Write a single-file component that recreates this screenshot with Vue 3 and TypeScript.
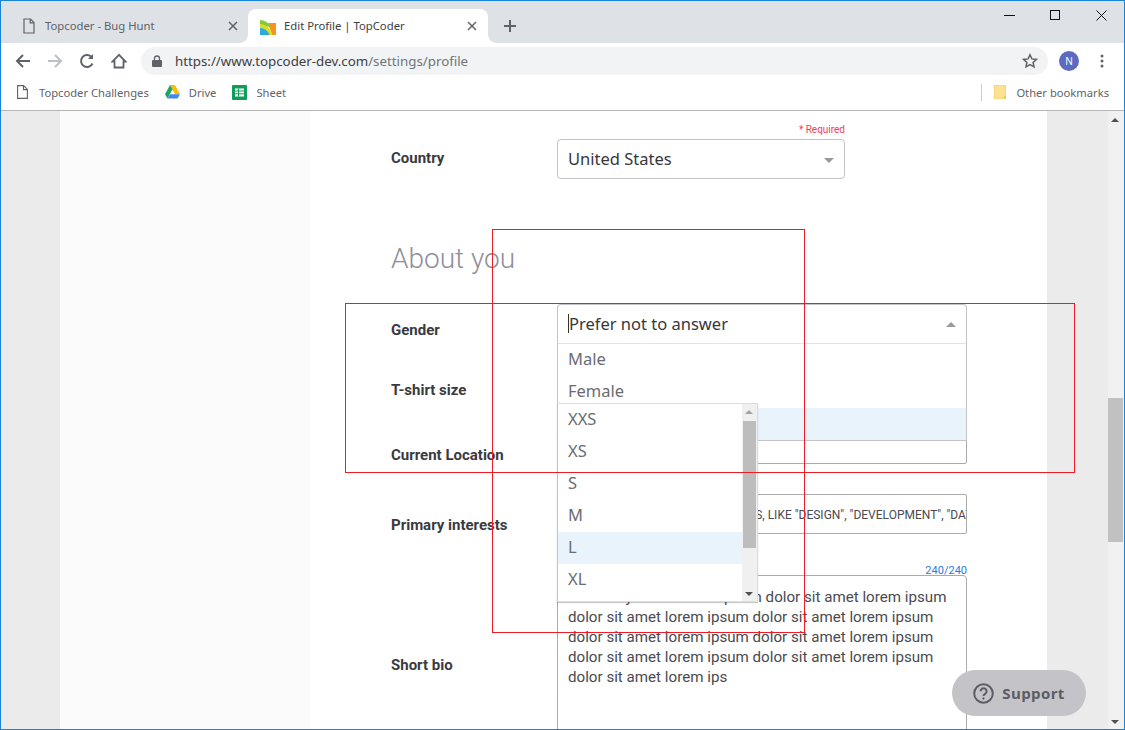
<script setup lang="ts">
const genderOptions = [
  { label: 'Male', active: false },
  { label: 'Female', active: false },
  { label: 'Prefer not to answer', active: true },
]
const sizeOptions = ['XXS', 'XS', 'S', 'M', 'L', 'XL']
const loremLine = 'dolor sit amet lorem ipsum dolor sit amet lorem ipsum'
const bio = `Summary notes lorem ipsum dolor sit amet lorem ipsum ${loremLine} ${loremLine} ${loremLine} dolor sit amet lorem ips`
</script>

<template>
  <div class="window">
    <header class="tabstrip">
      <div class="tab">
        <svg class="tab-icon" width="12" height="16" viewBox="0 0 12 16" fill="none" stroke="#5f6368" stroke-width="1.2">
          <path d="M1 1h6.500L11 4.500V15H1z" /><path d="M7.200 1v3.800H11" />
        </svg>
        <span class="tab-title">Topcoder - Bug Hunt</span>
        <svg class="tab-close" width="10" height="10" viewBox="0 0 10 10" stroke="#5f6368" stroke-width="1.5"><path d="M1 1l8 8M9 1l-8 8" /></svg>
      </div>
      <div class="tab tab-active">
        <svg class="tab-favicon" width="16" height="15" viewBox="0 0 16 15">
          <path d="M8 3h8v12h-4z" fill="#f7931e" />
          <path d="M0 0c5 0 9 3 10.500 7L0 6z" fill="#8cc63f" />
          <path d="M0 4c6 0 11 5 12.500 11H8L0 8z" fill="#d7df23" />
          <path d="M0 8c4.500 0 8 3 9.500 7H0z" fill="#29abe2" />
        </svg>
        <span class="tab-title tab-title-active">Edit Profile | TopCoder</span>
        <svg class="tab-close tab-close-active" width="10" height="10" viewBox="0 0 10 10" stroke="#5f6368" stroke-width="1.5"><path d="M1 1l8 8M9 1l-8 8" /></svg>
      </div>
      <svg class="new-tab" width="14" height="14" viewBox="0 0 14 14" stroke="#5f6368" stroke-width="2"><path d="M7 1v12M1 7h12" /></svg>
      <div class="window-controls">
        <svg width="11" height="11" viewBox="0 0 11 11" stroke="#111" stroke-width="1"><path d="M0 5.500h11" /></svg>
        <svg width="11" height="11" viewBox="0 0 11 11" fill="none" stroke="#111" stroke-width="1"><rect x=".5" y=".5" width="9" height="9" /></svg>
        <svg width="11" height="11" viewBox="0 0 11 11" stroke="#111" stroke-width="1"><path d="M.5.500l10 10M10.500.500l-10 10" /></svg>
      </div>
    </header>

    <div class="toolbar">
      <svg class="tool" width="16" height="16" viewBox="0 0 16 16" fill="none" stroke="#5f6368" stroke-width="2"><path d="M15 8H2M8 2L2 8l6 6" /></svg>
      <svg class="tool" width="16" height="16" viewBox="0 0 16 16" fill="none" stroke="#bdc1c6" stroke-width="2"><path d="M1 8h13M8 2l6 6-6 6" /></svg>
      <svg class="tool" width="16" height="16" viewBox="0 0 16 16" fill="none" stroke="#5f6368" stroke-width="2"><path d="M13.500 10.500A6 6 0 1 1 12.200 3.700" /><path d="M14 1v5H9z" fill="#5f6368" stroke="none" /></svg>
      <svg class="tool" width="16" height="16" viewBox="0 0 16 16" fill="none" stroke="#5f6368" stroke-width="1.8"><path d="M8 1.800L1.500 8.500h2v6h9v-6h2z" /></svg>
      <div class="omnibox">
        <svg width="10" height="12" viewBox="0 0 10 12"><path d="M1 5h8a1 1 0 0 1 1 1v5a1 1 0 0 1-1 1H1a1 1 0 0 1-1-1V6a1 1 0 0 1 1-1z" fill="#5f6368" /><path d="M2.500 5V3.500a2.500 2.500 0 0 1 5 0V5" fill="none" stroke="#5f6368" stroke-width="1.300" /></svg>
        <span class="url"><span class="url-host">https://www.topcoder-dev.com</span>/settings/profile</span>
        <svg class="star" width="16" height="16" viewBox="0 0 16 16" fill="none" stroke="#5f6368" stroke-width="1.500"><path d="M8 1.800l1.900 4.100 4.500.5-3.300 3 .9 4.400L8 11.600l-4 2.200.9-4.400-3.300-3 4.500-.5z" /></svg>
      </div>
      <span class="avatar">N</span>
      <svg class="menu-dots" width="4" height="14" viewBox="0 0 4 14" fill="#5f6368"><circle cx="2" cy="2" r="1.500" /><circle cx="2" cy="7" r="1.500" /><circle cx="2" cy="12" r="1.500" /></svg>
    </div>

    <nav class="bookmarks">
      <span class="bookmark bookmark-doc">
        <svg width="11" height="14" viewBox="0 0 11 14" fill="none" stroke="#5f6368" stroke-width="1.100"><path d="M.6.600h6l3.800 3.800v9H.6z" /><path d="M6.500.600v4h3.900" /></svg>
        Topcoder Challenges
      </span>
      <span class="bookmark">
        <svg width="15" height="14" viewBox="0 0 15 14"><path d="M5 0h5l5 9.200h-5z" fill="#fbbc04" /><path d="M5 0l2.500 4.300L2.500 13.500 0 9.200z" fill="#1fa463" /><path d="M2.500 13.500L5 9.200h10l-2.500 4.300z" fill="#4285f4" /></svg>
        Drive
      </span>
      <span class="bookmark">
        <svg width="15" height="15" viewBox="0 0 15 15"><rect width="15" height="15" rx="1" fill="#0f9d58" /><path d="M3 3.500h9v8H3z" fill="#fff" /><path d="M3 6h9M3 8.800h9M6.500 3.500v8" stroke="#0f9d58" stroke-width="1" /></svg>
        Sheet
      </span>
      <span class="bookmarks-sep"></span>
      <span class="bookmark other">
        <svg width="12" height="14" viewBox="0 0 12 14"><path d="M0 0h11a1 1 0 0 1 1 1v13H0z" fill="#fde293" stroke="#f0c95c" stroke-width=".8" /><rect x="10" y="11" width="2" height="3" fill="#f0c95c" /></svg>
        Other bookmarks
      </span>
    </nav>

    <main class="viewport">
      <div class="gutter"></div>
      <div class="sidebar"></div>
      <section class="form">
        <div class="required">* Required</div>
        <div class="row row-country">
          <label class="label label-country">Country</label>
          <div class="select select-country">
            <span>United States</span>
            <i class="caret caret-down"></i>
          </div>
        </div>

        <h2 class="heading">About you</h2>

        <div class="row row-gender">
          <label class="label label-gender">Gender</label>
          <div class="field-anchor">
            <div class="select select-open">
              <span class="cursor"></span><span>Prefer not to answer</span>
              <i class="caret caret-up"></i>
            </div>
            <ul class="menu menu-gender">
              <li v-for="o in genderOptions" :key="o.label" class="option" :class="{ 'option-active': o.active }">{{ o.label }}</li>
            </ul>
          </div>
        </div>

        <div class="row row-size">
          <label class="label label-size">T-shirt size</label>
          <div class="field-anchor">
            <div class="menu-size">
              <ul class="size-list">
                <li v-for="s in sizeOptions" :key="s" class="option" :class="{ 'option-active': s === 'L' }">{{ s }}</li>
              </ul>
              <div class="mini-scroll">
                <i class="caret mini-up"></i>
                <div class="mini-thumb"></div>
                <i class="caret mini-down"></i>
              </div>
            </div>
          </div>
        </div>

        <div class="row row-location">
          <label class="label label-low">Current Location</label>
          <div class="input"></div>
        </div>

        <div class="row row-interests">
          <label class="label label-low">Primary interests</label>
          <div class="input interests">SELECT YOUR PRIMARY INTERESTS, LIKE "DESIGN", "DEVELOPMENT", "DATA SCIENCE"</div>
        </div>

        <div class="counter">240/240</div>
        <div class="row row-bio">
          <label class="label label-bio">Short bio</label>
          <div class="textarea">{{ bio }}</div>
        </div>
      </section>
      <div class="gutter gutter-right"></div>
      <aside class="scrollbar">
        <i class="caret sb-up"></i>
        <div class="sb-thumb"></div>
        <i class="caret sb-down"></i>
      </aside>

      <div class="mark mark-tall"></div>
      <div class="mark mark-wide"></div>

      <button class="support">
        <svg width="21" height="21" viewBox="0 0 21 21" fill="none" stroke="#5d5c63" stroke-width="2">
          <circle cx="10.500" cy="10.500" r="9.300" />
          <path d="M7.600 8.200a3 3 0 1 1 4.500 2.600c-1 .6-1.600 1-1.600 2.200" />
          <circle cx="10.500" cy="15.500" r=".7" fill="#5d5c63" stroke-width="1" />
        </svg>
        Support
      </button>
    </main>
  </div>
</template>

<style>
html, body { margin: 0; padding: 0; background: #fff; }
</style>

<style scoped>
.window {
  width: 1125px;
  height: 730px;
  box-sizing: border-box;
  border: 1px solid #1883d7;
  display: flex;
  flex-direction: column;
  overflow: hidden;
  font-family: "Noto Sans", sans-serif;
  background: #fff;
}
.tabstrip {
  height: 42px;
  flex: none;
  display: flex;
  align-items: flex-end;
  background: #dee1e6;
  position: relative;
}
.tab {
  width: 233px;
  margin-left: 14px;
  height: 34px;
  display: flex;
  align-items: center;
  padding-left: 8px;
  box-sizing: border-box;
}
.tab-icon { margin-right: 10px; }
.tab-title {
  font-size: 11.3px;
  line-height: 16px;
  color: #5f6368;
  flex: 1;
  white-space: nowrap;
  margin-bottom: 0;
}
.tab-close { margin-right: 10px; }
.tab-close-active { margin-right: 11px; }
.tab-active {
  width: 240px;
  margin-left: 0;
  background: #fff;
  border-radius: 8px 8px 0 0;
  padding-left: 12px;
  position: relative;
}
.tab-active::before,
.tab-active::after {
  content: "";
  position: absolute;
  bottom: 0;
  width: 8px;
  height: 8px;
}
.tab-active::before {
  left: -8px;
  background: radial-gradient(circle at 0 0, #dee1e6 7.5px, #fff 8px);
}
.tab-active::after {
  right: -8px;
  background: radial-gradient(circle at 100% 0, #dee1e6 7.5px, #fff 8px);
}
.tab-favicon { margin-right: 8px; margin-top: 2px; }
.tab-title-active { color: #3c4043; }
.new-tab { margin: 0 0 10px 15px; }
.window-controls {
  position: absolute;
  top: 9px;
  right: 17px;
  display: flex;
  gap: 35px;
}
.toolbar {
  height: 35px;
  flex: none;
  display: flex;
  align-items: center;
  padding-left: 14px;
  background: #fff;
}
.tool { margin-right: 16px; flex: none; }
.omnibox {
  width: 907px;
  height: 28px;
  margin-left: -2px;
  box-sizing: border-box;
  padding: 0 10px 0 11px;
  background: #f1f3f4;
  border-radius: 14px;
  display: flex;
  align-items: center;
  flex: none;
}
.url {
  font-size: 13.3px;
  color: #70757a;
  margin-left: 13px;
  flex: 1;
}
.url-host { color: #3c4043; }
.avatar {
  width: 20px;
  height: 20px;
  margin-left: 11px;
  border-radius: 50%;
  background: #5c6bc0;
  color: #fff;
  font-size: 10px;
  display: flex;
  align-items: center;
  justify-content: center;
  flex: none;
}
.menu-dots { margin-left: 21px; flex: none; }
.bookmarks {
  height: 33px;
  flex: none;
  box-sizing: border-box;
  border-bottom: 1px solid #b6b6b6;
  padding-bottom: 4px;
  display: flex;
  align-items: center;
  padding-left: 16px;
  background: #fff;
}
.bookmark {
  display: flex;
  align-items: center;
  gap: 9px;
  font-size: 11.2px;
  color: #5f6368;
  margin-right: 16px;
  white-space: nowrap;
}
.bookmark-doc { gap: 11px; }
.bookmarks-sep {
  margin-left: auto;
  width: 1px;
  height: 17px;
  background: #ccc;
  margin-right: 12px;
}
.other { margin-right: 15px; gap: 10px; }
.viewport {
  flex: 1;
  min-height: 0;
  display: flex;
  position: relative;
  overflow: hidden;
}
.gutter { width: 59px; flex: none; background: #ebebeb; }
.gutter-right { width: 61px; }
.sidebar { width: 250px; flex: none; background: #fbfbfb; }
.form {
  width: 737px;
  flex: none;
  box-sizing: border-box;
  padding-left: 81px;
  padding-top: 12px;
  background: #fff;
}
.required {
  width: 454px;
  text-align: right;
  font: 10px/14px "Roboto", sans-serif;
  color: #ef3a5d;
  height: 16px;
}
.row {
  display: grid;
  grid-template-columns: 166px 410px;
  align-items: start;
}
.label {
  font: 700 15px/20px "Roboto", sans-serif;
  color: #3a3a3f;
}
.label-country { margin-top: 9px; }
.label-gender { margin-top: 16px; }
.label-size { margin-top: 16px; }
.label-low { margin-top: 21px; }
.label-bio { margin-top: 80px; }
.select {
  box-sizing: border-box;
  height: 40px;
  border: 1px solid #c3c3c8;
  border-radius: 4px;
  display: flex;
  align-items: center;
  padding: 0 0 2px 10px;
  font-size: 16.5px;
  color: #37373c;
  position: relative;
  background: #fff;
}
.select-country { width: 288px; }
.caret {
  position: absolute;
  width: 0;
  height: 0;
  border-left: 5px solid transparent;
  border-right: 5px solid transparent;
}
.caret-down { right: 10px; top: 18px; border-top: 5px solid #999; }
.caret-up { right: 10px; top: 17px; border-bottom: 5px solid #999; }
.heading {
  margin: 59px 0 25px;
  font: 300 28px/41px "Roboto", sans-serif;
  color: #8f8f99;
}
.row-gender { height: 60px; }
.row-size { height: 60px; }
.field-anchor { position: relative; width: 410px; }
.select-open { border-radius: 4px 4px 0 0; border-color: #c3c3c8; border-bottom-color: #e3e3e3; }
.cursor {
  width: 1px;
  height: 19px;
  background: #333;
}
.menu {
  list-style: none;
  margin: 0;
  padding: 0;
}
.menu-gender {
  position: absolute;
  z-index: 1;
  top: 40px;
  left: 0;
  width: 100%;
  box-sizing: border-box;
  border: 1px solid #c3c3c8;
  border-top: 0;
  background: #fff;
  height: 97px;
}
.option {
  box-sizing: border-box;
  height: 32px;
  padding-left: 10px;
  font-size: 16.5px;
  line-height: 30px;
  color: #6b6b72;
}
.option-active { background: #e9f3fc; }
.menu-size {
  position: absolute;
  z-index: 2;
  left: 0;
  top: 39px;
  width: 201px;
  height: 199px;
  box-sizing: border-box;
  border: 1px solid #dcdcdc;
  border-left-color: #c3c3c8;
  background: #fff;
  display: flex;
  box-shadow: 0 1px 1px rgba(0, 0, 0, 0.2);
}
.size-list { list-style: none; margin: 0; padding: 0; flex: 1; }
.mini-scroll {
  width: 15px;
  flex: none;
  background: #f0f0f0;
  position: relative;
}
.mini-thumb {
  position: absolute;
  top: 17px;
  left: 1px;
  width: 13px;
  height: 127px;
  background: #bdbdbd;
}
.mini-up { top: 6px; left: 3px; border-left-width: 4px; border-right-width: 4px; border-bottom: 4px solid #a3a3a3; }
.mini-down { bottom: 5px; left: 3px; border-left-width: 4px; border-right-width: 4px; border-top: 4px solid #505050; }
.input {
  box-sizing: border-box;
  height: 40px;
  border: 1px solid #aaa;
  border-radius: 2px;
  background: #fff;
}
.row-location { height: 70px; }
.row-interests { height: 41px; }
.interests {
  font: 12px/41px "Roboto", sans-serif;
  color: #4a4a50;
  padding-left: 11px;
  overflow: hidden;
  white-space: nowrap;
}
.counter {
  width: 576px;
  text-align: right;
  font: 11px/14px "Roboto", sans-serif;
  color: #2c7be5;
  height: 11px;
  margin-top: -12px;
  padding-top: 41px;
}
.textarea {
  box-sizing: border-box;
  height: 200px;
  border: 1px solid #aaa;
  border-radius: 4px 4px 0 0;
  padding: 11px 10px;
  font: 15.15px/20px "Roboto", sans-serif;
  color: #4a4a50;
}
.scrollbar {
  width: 16px;
  flex: none;
  background: #f1f1f1;
  position: relative;
}
.sb-thumb {
  position: absolute;
  left: 0;
  top: 287px;
  width: 15px;
  height: 144px;
  background: #c1c1c1;
}
.sb-up { top: 7px; left: 3px; border-left-width: 4px; border-right-width: 4px; border-bottom: 4px solid #505050; }
.sb-down { bottom: 5px; left: 3px; border-left-width: 4px; border-right-width: 4px; border-top: 4px solid #505050; }
.mark {
  position: absolute;
  z-index: 4;
  box-sizing: border-box;
  border: 1px solid #ee1c25;
  pointer-events: none;
}
.mark-tall { left: 491px; top: 118px; width: 313px; height: 404px; }
.mark-wide { left: 344px; top: 192px; width: 730px; height: 170px; }
.support {
  position: absolute;
  z-index: 3;
  left: 951px;
  top: 559px;
  width: 134px;
  height: 46px;
  border: 0;
  border-radius: 23px;
  background: #c4c3c8;
  color: #5d5c63;
  font: 700 15px "Open Sans", sans-serif;
  letter-spacing: 0.4px;
  display: flex;
  align-items: center;
  justify-content: center;
  gap: 8px;
  padding: 0;
}
</style>
